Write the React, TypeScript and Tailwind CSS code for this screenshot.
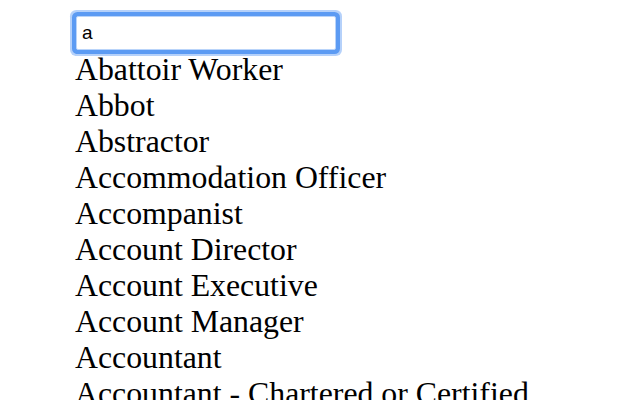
import { useState } from "react";

const occupations = [
  "Abattoir Worker",
  "Abbot",
  "Abstractor",
  "Accommodation Officer",
  "Accompanist",
  "Account Director",
  "Account Executive",
  "Account Manager",
  "Accountant",
  "Accountant - Chartered or Certified",
  "Accounts Assistant",
  "Accounts Clerk",
];

export default function App() {
  const [query, setQuery] = useState("a");

  const matches = occupations.filter((name) =>
    name.toLowerCase().includes(query.toLowerCase()),
  );

  return (
    <div className="h-[400px] overflow-hidden bg-white pl-[76px] pt-4 font-['Liberation_Serif','Times_New_Roman',serif] text-black">
      <input
        autoFocus
        value={query}
        onChange={(e) => setQuery(e.target.value)}
        className="block h-[34px] w-[260px] rounded-[2px] border border-[#b9d4fa] bg-white px-[5px] font-['Liberation_Sans',Arial,sans-serif] text-[19px] text-black shadow-[0_0_0_4px_#5c9bf3,0_0_0_6px_#b5d1fa] outline-none"
      />
      <ul className="-ml-[1px] mt-[2px]">
        {matches.map((name) => (
          <li key={name} className="text-[31.8px] leading-[36px]">
            {name}
          </li>
        ))}
      </ul>
    </div>
  );
}
